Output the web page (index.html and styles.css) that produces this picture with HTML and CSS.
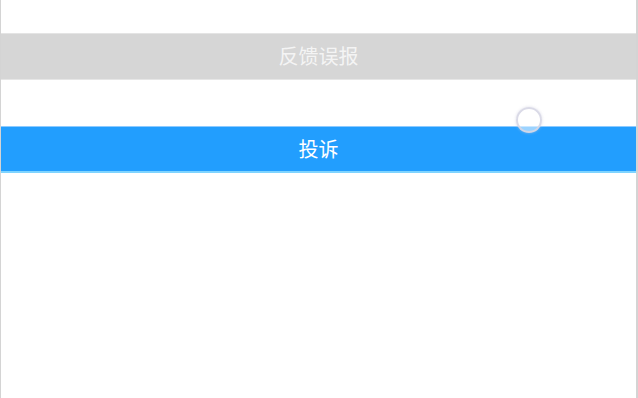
FILE: index.html
```html
<!DOCTYPE html>
<html lang="zh-CN">
    <head>
        <meta charset="UTF-8" />
        <meta name="viewport" content="width=device-width, initial-scale=1.0" />
        <title>反馈</title>
        <link rel="stylesheet" href="styles.css">
    </head>
    <body>
        <main class="sheet">
            <button class="action action-report" type="button">反馈误报</button>
            <button class="action action-complain" type="button">投诉</button>
            <span class="touch-dot"></span>
        </main>
    </body>
</html>
```

FILE: styles.css
```css
* {
    box-sizing: border-box;
}

html,
body {
    margin: 0;
    padding: 0;
    background: #fff;
}

body {
    font-family: "Noto Sans CJK SC", "Noto Sans", sans-serif;
}

.sheet {
    position: relative;
    display: flex;
    flex-direction: column;
    gap: 46px;
    height: 398px;
    padding-top: 33px;
    border-left: 1px solid #d4d4d4;
    border-right: 2px solid #d4d4d4;
}

.action {
    display: block;
    width: 100%;
    height: 47px;
    margin: 0;
    padding: 0 0 3px;
    border: 0;
    font-family: inherit;
    font-size: 20px;
    font-weight: 400;
    line-height: 44px;
    color: #fff;
    cursor: pointer;
}

.action-report {
    background: #d6d6d6;
    color: #f4f4f4;
    border-top: 1px solid #e4e4e4;
    border-bottom: 1px solid #e6e6e6;
}

.action-complain {
    background: #229efe;
    border-top: 1px solid #8ccaff;
    border-bottom: 2px solid #7fd4ff;
}

/* touch indicator from the recording */
.touch-dot {
    position: absolute;
    left: 515px;
    top: 107px;
    width: 26px;
    height: 26px;
    border-radius: 50%;
    border: 2px solid rgba(214, 214, 228, 0.9);
    background: rgba(255, 255, 255, 0.55);
    box-shadow: 0 0 3px rgba(200, 200, 220, 0.6);
}
```
